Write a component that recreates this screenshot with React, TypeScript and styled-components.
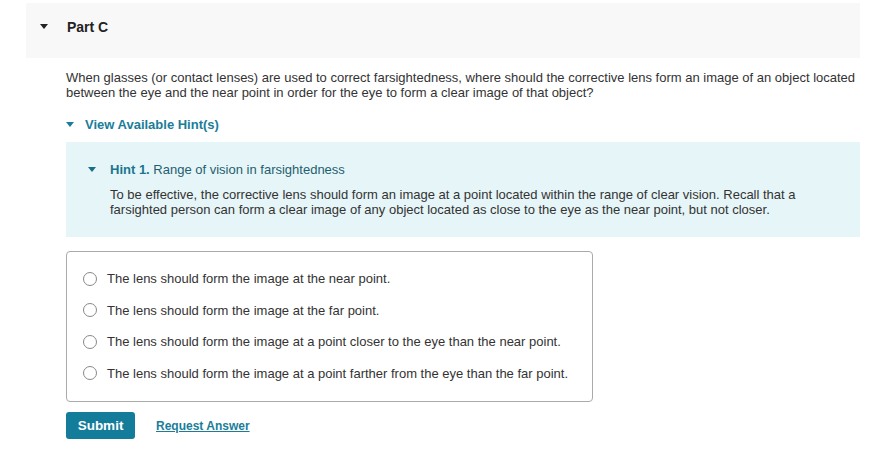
import React, { ReactElement } from "react";
import styled, { createGlobalStyle } from "styled-components";

const GlobalStyle = createGlobalStyle`
  body {
    margin: 0;
    background: #fff;
    font-family: "Liberation Sans", Arial, sans-serif;
    color: #333;
  }
`;

const options = [
  "The lens should form the image at the near point.",
  "The lens should form the image at the far point.",
  "The lens should form the image at a point closer to the eye than the near point.",
  "The lens should form the image at a point farther from the eye than the far point.",
];

export default function App(): ReactElement {
  return (
    <>
      <GlobalStyle />
      <Page>
        <PartHeader>
          <Caret $color="#222" />
          <PartTitle>Part C</PartTitle>
        </PartHeader>

        <Body>
          <Question>
            When glasses (or contact lenses) are used to correct farsightedness, where should the
            corrective lens form an image of an object located between the eye and the near point in
            order for the eye to form a clear image of that object?
          </Question>

          <HintToggle>
            <Caret $color="#1a7d99" />
            View Available Hint(s)
          </HintToggle>

          <HintBox>
            <HintTitle>
              <Caret $color="#1a6f87" />
              <span>
                <strong>Hint 1.</strong> Range of vision in farsightedness
              </span>
            </HintTitle>
            <HintText>
              To be effective, the corrective lens should form an image at a point located within the
              range of clear vision. Recall that a farsighted person can form a clear image of any
              object located as close to the eye as the near point, but not closer.
            </HintText>
          </HintBox>

          <Options>
            {options.map((o) => (
              <Option key={o}>
                <Radio type="radio" name="partc" />
                {o}
              </Option>
            ))}
          </Options>

          <Actions>
            <SubmitBtn type="button">Submit</SubmitBtn>
            <RequestLink href="#">Request Answer</RequestLink>
          </Actions>
        </Body>
      </Page>
    </>
  );
}

const Page = styled.div`
  padding: 3px 11px 0 26px;
`;

const PartHeader = styled.div`
  display: flex;
  align-items: center;
  gap: 19px;
  height: 55px;
  padding: 0 0 8px 14px;
  box-sizing: border-box;
  background: #f8f8f8;
`;

const Caret = styled.span<{ $color: string }>`
  display: inline-block;
  flex: none;
  width: 0;
  height: 0;
  border-left: 4.5px solid transparent;
  border-right: 4.5px solid transparent;
  border-top: 5px solid ${(p) => p.$color};
`;

const PartTitle = styled.h2`
  margin: 0;
  font-size: 14px;
  font-weight: bold;
  color: #222;
`;

const Body = styled.div`
  padding: 12px 0 0 40px;
`;

const Question = styled.p`
  margin: 0;
  font-size: 13px;
  line-height: 15px;
  color: #333;
`;

const HintToggle = styled.div`
  display: flex;
  align-items: center;
  gap: 11px;
  margin-top: 17px;
  font-size: 13px;
  font-weight: bold;
  color: #1a7d99;
`;

const HintBox = styled.div`
  margin-top: 10px;
  padding: 20px 20px 20px 22px;
  background: #e6f5f7;
`;

const HintTitle = styled.div`
  display: flex;
  align-items: center;
  gap: 14px;
  font-size: 13px;
  color: #1f5f70;

  strong {
    color: #1a7590;
  }
`;

const HintText = styled.p`
  margin: 10px 0 0 22px;
  font-size: 13px;
  line-height: 15px;
  color: #333;
`;

const Options = styled.div`
  box-sizing: border-box;
  width: 527px;
  margin-top: 14px;
  padding: 17px 0 18px 16px;
  border: 1px solid #aaa;
  border-radius: 4px;
  display: flex;
  flex-direction: column;
  gap: 12px;
`;

const Option = styled.label`
  display: flex;
  align-items: center;
  gap: 10px;
  height: 19.5px;
  font-size: 13px;
  color: #333;
`;

const Radio = styled.input`
  appearance: none;
  flex: none;
  width: 14px;
  height: 14px;
  margin: 0;
  border: 1px solid #888;
  border-radius: 50%;
  background: #fff;
`;

const Actions = styled.div`
  display: flex;
  align-items: center;
  gap: 21px;
  margin-top: 10px;
`;

const SubmitBtn = styled.button`
  width: 69px;
  height: 27px;
  border: none;
  border-radius: 3px;
  background: #137c9b;
  color: #fff;
  font-family: inherit;
  font-size: 13.5px;
  font-weight: bold;
`;

const RequestLink = styled.a`
  font-size: 12px;
  font-weight: bold;
  color: #1a7d99;
  text-decoration: underline;
`;
